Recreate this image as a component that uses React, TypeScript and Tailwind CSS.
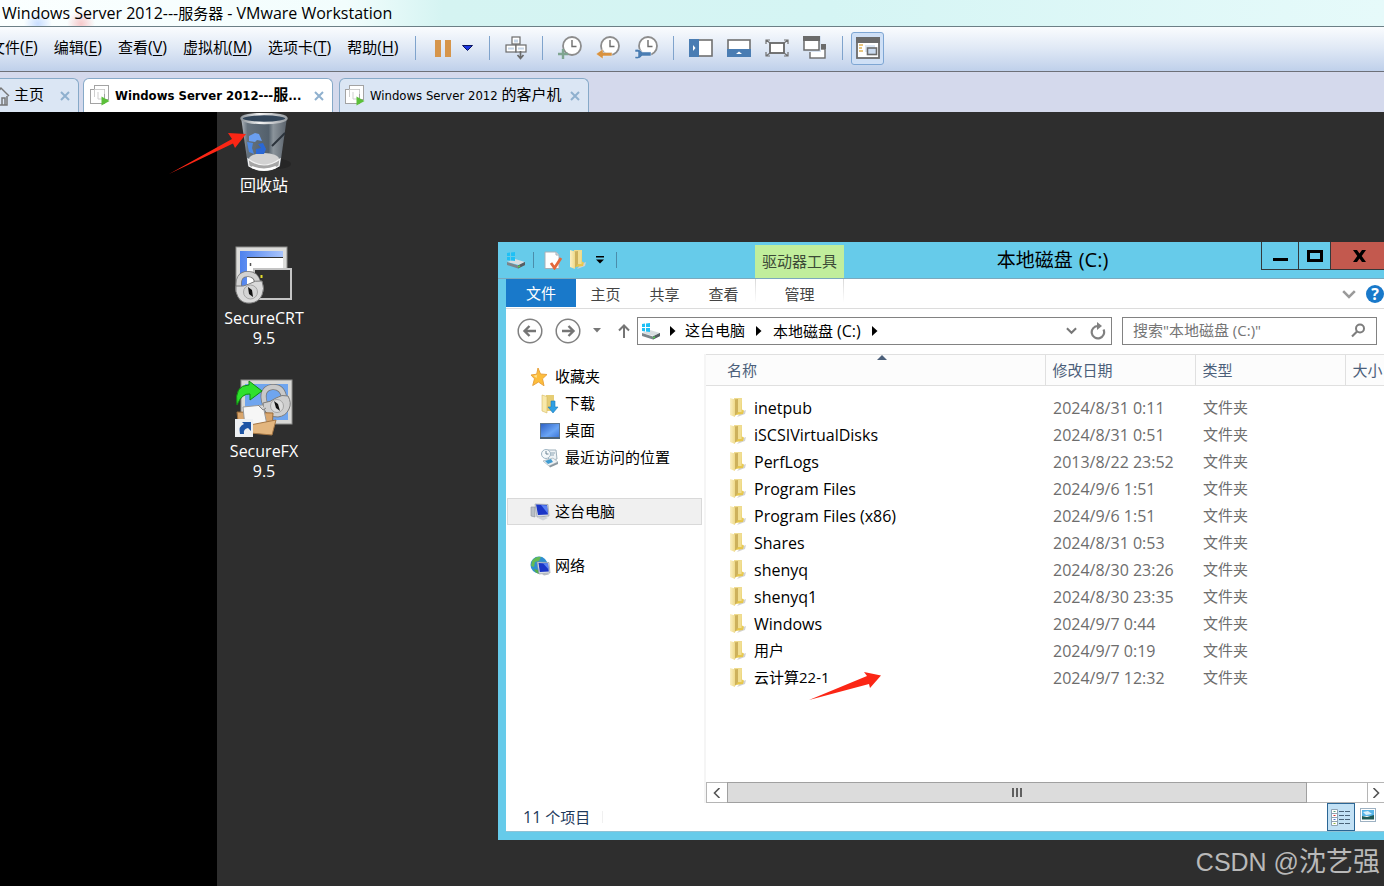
import type { ReactNode } from "react";

/* ---------- VMware toolbar icons ---------- */

function Clock({ children }: { children: ReactNode }) {
  return (
    <svg width="24" height="26" viewBox="0 0 24 26">
      <circle cx="14" cy="11" r="9" fill="#fff" stroke="#8d8d8d" strokeWidth="1.8" />
      <path d="M14 5v6.5h4.5" fill="none" stroke="#6e6e6e" strokeWidth="1.4" />
      {children}
    </svg>
  );
}

function PauseIcon() {
  return (
    <svg width="16" height="17" viewBox="0 0 16 17">
      <path d="M0 0h6v17H0zM10 0h6v17h-6z" fill="#d6954b" />
    </svg>
  );
}

function SendKeysIcon() {
  return (
    <svg width="22" height="24" viewBox="0 0 22 24">
      <g fill="#fff" stroke="#6b6b6b" strokeWidth="1.2">
        <rect x="7" y="1" width="8" height="7" />
        <rect x="1" y="9" width="10" height="7" />
        <rect x="11" y="9" width="10" height="7" />
      </g>
      <path d="M9 3.500h4v3H9zM3 11.500h6v2H3zM13 11.500h6v2h-6z" fill="#c6d6e8" />
      <path d="M15.500 15v7M12.500 19l3 3.500 3-3.500" fill="none" stroke="#6b6b6b" strokeWidth="1.7" />
    </svg>
  );
}

function SidebarIcon() {
  return (
    <svg width="24" height="18" viewBox="0 0 24 18">
      <rect x="1" y="1" width="22" height="16" fill="#fff" stroke="#707070" strokeWidth="1.6" />
      <path d="M0 0h10v18H0z" fill="#4a7db3" />
      <path d="M4 6l2.500 3L4 12z" fill="#fff" />
    </svg>
  );
}

function ThumbBarIcon() {
  return (
    <svg width="24" height="18" viewBox="0 0 24 18">
      <rect x="1" y="1" width="22" height="16" fill="#fff" stroke="#707070" strokeWidth="1.6" />
      <path d="M0 10h24v8H0z" fill="#4a7db3" />
      <path d="M9 15l3-2.500 3 2.500z" fill="#fff" />
    </svg>
  );
}

function FullscreenIcon() {
  return (
    <svg width="24" height="18" viewBox="0 0 24 18">
      <rect x="5" y="4" width="14" height="10" fill="#fff" stroke="#666" strokeWidth="1.8" />
      <path
        d="M1 5V1h4M1 1l4 3M19 1h4v4M23 1l-4 3M1 13v4h4M1 17l4-3M23 13v4h-4M23 17l-4-3"
        fill="none"
        stroke="#707070"
        strokeWidth="1.2"
      />
    </svg>
  );
}

function UnityIcon() {
  return (
    <svg width="24" height="24" viewBox="0 0 24 24">
      <rect x="7" y="13" width="15" height="9" fill="#fff" stroke="#6b6b6b" strokeWidth="1.4" />
      <path d="M18 8h5v5h-5z" fill="#6b6b6b" />
      <rect x="0" y="0" width="18" height="16" fill="#d6e2f1" />
      <rect x="1" y="1" width="15" height="13" fill="#fff" stroke="#6b6b6b" strokeWidth="1.5" />
      <path d="M0 0h17v5H0z" fill="#6b6b6b" />
    </svg>
  );
}

function ConsoleIcon() {
  return (
    <svg width="24" height="22" viewBox="0 0 24 22">
      <rect x="1" y="1" width="22" height="20" fill="#fff" stroke="#6b6b6b" strokeWidth="1.8" />
      <path d="M0 0h24v6H0z" fill="#6b6b6b" />
      <path d="M3 8h4M3 11h3M3 14h4" stroke="#e0b356" strokeWidth="1.3" />
      <rect x="9" y="8" width="10" height="7" fill="#dce7f4" />
      <rect x="11.500" y="11" width="9" height="6.500" fill="#c9daf0" stroke="#6b6b6b" strokeWidth="1.6" />
    </svg>
  );
}

function VmTabIcon() {
  return (
    <svg width="20" height="21" viewBox="0 0 20 21" className="shrink-0">
      <g fill="#fff" stroke="#a3a3a3">
        <rect x="4.500" y=".5" width="14" height="14" />
        <rect x=".5" y="4.500" width="14" height="14" />
      </g>
      <path d="M4.500 12V4.500H14.500V9M8 7v7h6" fill="none" stroke="#cfcfcf" />
      <path d="M11.500 11.500l8 4.500-8 4.500z" fill="#5cc03a" />
    </svg>
  );
}

function CloseGlyph() {
  return (
    <svg width="10" height="10" viewBox="0 0 10 10">
      <path d="M1 1l8 8M9 1L1 9" stroke="#8fb0ce" strokeWidth="2" />
    </svg>
  );
}

/* ---------- Desktop icons ---------- */

function RecycleBin() {
  return (
    <svg width="58" height="60" viewBox="0 0 58 60">
      <defs>
        <linearGradient id="bin" x1="0" x2="1">
          <stop offset="0" stopColor="#b4bac0" />
          <stop offset=".14" stopColor="#66727d" />
          <stop offset=".6" stopColor="#53606c" />
          <stop offset=".7" stopColor="#8b949b" />
          <stop offset="1" stopColor="#59616a" />
        </linearGradient>
        <linearGradient id="rim" x1="0" x2="1">
          <stop offset="0" stopColor="#8e959b" />
          <stop offset=".4" stopColor="#f4f4f4" />
          <stop offset="1" stopColor="#9a9fa4" />
        </linearGradient>
      </defs>
      <ellipse cx="42" cy="51" rx="14" ry="5" fill="#262626" />
      <path d="M6 4l7 49q16 9 32 0l7-49z" fill="url(#bin)" />
      <path d="M50 20L37 33" stroke="#2b333b" strokeWidth="2" />
      <ellipse cx="29" cy="46" rx="15" ry="6" fill="#d2d2d2" />
      <path d="M13 46q16 12 32 0l-1 7q-15 9-30 0z" fill="#a6a6a6" stroke="#f3f3f3" strokeWidth="1.200" />
      <path d="M17 54q12 5 24 0" fill="none" stroke="#fff" strokeWidth="2" />
      <ellipse cx="29" cy="5.500" rx="22.500" ry="4.500" fill="#33465a" stroke="url(#rim)" strokeWidth="2.500" />
      <path d="M14 23l6-3 4 1 3 7-5-1-2 2-6-1z" fill="#6b9ff0" />
      <path d="M12 29l6 1-1 5 2 6-5-2z" fill="#4c88e4" />
      <path d="M23 31l5-1 3 6-2 5h-8v-5l5-1z" fill="#2b68d6" />
    </svg>
  );
}

function SecureCrt() {
  return (
    <svg width="58" height="58" viewBox="0 0 58 58">
      <defs>
        <linearGradient id="crt" x1="0" x2="1">
          <stop offset="0" stopColor="#4e82ee" />
          <stop offset="1" stopColor="#a9c4fb" />
        </linearGradient>
      </defs>
      <rect x="1" y="1" width="51" height="44" fill="#dcdcda" stroke="#8e8e8c" />
      <rect x="5" y="5" width="43" height="36" fill="url(#crt)" />
      <rect x="12" y="11" width="36" height="30" fill="#fff" />
      <path d="M12 11.500h36" stroke="#333" />
      <path d="M15.500 17v3" stroke="#555" strokeWidth="1.500" />
      <rect x="19" y="23" width="37" height="30" fill="#303030" stroke="#c4c4c4" strokeWidth="2" />
      <path d="M26.500 29v3" stroke="#e5de2c" strokeWidth="2" />
      <path d="M4 42q-2-14 9-14 8 0 10 9" fill="none" stroke="#777" strokeWidth="6" />
      <path d="M4 42q-2-14 9-14 8 0 10 9" fill="none" stroke="#d2d2d2" strokeWidth="4.500" />
      <path d="M1 40q8 1 13-2 6-4 13-3 3 8 0 14-3 7-11 8-9 1-13-6-3-5-2-11z" fill="#dadada" stroke="#7c7c7c" />
      <circle cx="15.500" cy="46" r="7" fill="#d4d4d4" stroke="#a5a5a5" />
      <path d="M13 41l4 3 1 7-4-3z" fill="#111" />
    </svg>
  );
}

function SecureFx() {
  return (
    <svg width="58" height="60" viewBox="0 0 58 60">
      <rect x="6" y="1" width="51" height="44" fill="#d8d8d6" stroke="#8e8e8c" />
      <rect x="10" y="5" width="43" height="36" fill="#6fa5ef" />
      <path d="M30 25q-5-15 7-17 10-1 12 10" fill="none" stroke="#777" strokeWidth="6" />
      <path d="M30 25q-5-15 7-17 10-1 12 10" fill="none" stroke="#c9c9c9" strokeWidth="4.500" />
      <path d="M28 24q8-1 13-5 6-4 12-2 4 7 1 13-3 7-11 8-9 0-13-6-2-4-2-8z" fill="#cfcfcf" stroke="#7c7c7c" />
      <circle cx="42" cy="27" r="6.500" fill="#dcdcdc" stroke="#a5a5a5" />
      <path d="M39 22l4 3 2 7-4-3z" fill="#111" />
      <path d="M2 33l36 1-1 20-33-3z" fill="#d9a66d" stroke="#9c6c38" />
      <path d="M8 28l20-2 4 20-22 2z" fill="#f6f6f6" stroke="#999" />
      <path d="M23 26l5 5 3-2" fill="#ccc" stroke="#888" />
      <path d="M15 46l26-5-4 15-22-2z" fill="#e3b67f" stroke="#a67745" />
      <path d="M2 26Q-1 6 14 6V2l13 10-12 9v-6Q7 14 2 26z" fill="#2fe02c" stroke="#108a12" />
      <rect x="0" y="40" width="18" height="18" fill="#eef0f2" />
      <path d="M5 55q-2-8 4-10l-2-2h9v9l-3-3q-5 1-4 6z" fill="#1e55a5" />
    </svg>
  );
}

/* ---------- Explorer icons ---------- */

function DriveIcon() {
  return (
    <svg width="20" height="18" viewBox="0 0 20 18">
      <path d="M1 11l8-3 10 3-6 3z" fill="#d9dde0" />
      <path d="M1 11l11 3.500 7-3.500v3l-7 3.500-11-3.500z" fill="#7c848a" />
      <path d="M12 14.500l7-3.500v3l-7 3.500z" fill="#565d63" />
      <path d="M12 16l2-1" stroke="#56c755" strokeWidth="1.500" />
      <path d="M1 2l3-.5V5H1zM5 1.400L9 1v4H5zM1 6h3v3.500L1 9zM5 6h4v4l-4-.5z" fill="#1fc0f5" />
    </svg>
  );
}

function FolderIcon() {
  return (
    <svg width="18" height="22" viewBox="0 0 18 22">
      <defs>
        <linearGradient id="folder" x1="0" x2="0" y1="0" y2="1">
          <stop offset="0" stopColor="#efdc92" />
          <stop offset="1" stopColor="#e6c544" />
        </linearGradient>
        <linearGradient id="flap" x1="0" x2="1">
          <stop offset="0" stopColor="#fbf0c4" />
          <stop offset="1" stopColor="#efda8a" />
        </linearGradient>
      </defs>
      <path d="M12 15l5-2-1 4-8 3z" fill="#d3d3d3" />
      <path d="M5 1h8v11.500l2 1-1 3.500-8 1z" fill="url(#folder)" />
      <path d="M5 2.500L9 2v13l-3 4z" fill="#cdb15c" />
      <path d="M1 1l5 1.500V20L1 18z" fill="url(#flap)" />
      <path d="M9 2h3.500v13H9z" fill="#f1de93" />
    </svg>
  );
}

function PropertiesIcon() {
  return (
    <svg width="19" height="19" viewBox="0 0 19 19">
      <path d="M1 1h11l3 3v13.500H1z" fill="#fff" stroke="#a7b0b8" />
      <path d="M12 1v3h3" fill="#dde2e6" stroke="#a7b0b8" />
      <path d="M7 12l3.500 5L17 7" fill="none" stroke="#e4683b" strokeWidth="2.800" />
    </svg>
  );
}

function StarIcon() {
  return (
    <svg width="18" height="20" viewBox="0 0 18 20">
      <path d="M8 1l2.500 6L17 7.500l-4.500 4.300 1.500 7L8.500 15l-5.800 3.500 1.800-6.700L1 8l5.700-.8z" fill="#fdbd3b" stroke="#e8a33d" />
      <path d="M8 4L7 8 3.500 8.700l3 2.300z" fill="#ffe493" />
    </svg>
  );
}

function DownloadsIcon() {
  return (
    <svg width="20" height="20" viewBox="0 0 20 20">
      <path d="M6 1h8v16H7z" fill="#e6cd74" />
      <path d="M2 1l5 1.500V19l-5-2z" fill="#f8e9ab" stroke="#d6bb63" strokeWidth=".6" />
      <path d="M11 7h4v6h3l-5 6-5-6h3z" fill="#2f9fe3" stroke="#1c7bbb" strokeWidth=".6" />
    </svg>
  );
}

function DesktopIcon() {
  return (
    <svg width="20" height="18" viewBox="0 0 20 18">
      <defs>
        <linearGradient id="desk" x1="0" x2="1" y1="0" y2="1">
          <stop offset="0" stopColor="#2c5fc4" />
          <stop offset=".6" stopColor="#6aa5f5" />
          <stop offset="1" stopColor="#3c76d9" />
        </linearGradient>
      </defs>
      <rect x=".5" y="1.500" width="19" height="14" fill="url(#desk)" stroke="#5c7792" />
      <path d="M0 15h20v2H0z" fill="#4c6377" />
    </svg>
  );
}

function RecentIcon() {
  return (
    <svg width="20" height="20" viewBox="0 0 20 20">
      <path d="M7 2h9l1 9-8 2z" fill="#eef3f6" stroke="#9fb0bb" />
      <path d="M9 5h6M9 7h5" stroke="#8fa5b4" />
      <circle cx="6" cy="6" r="4.500" fill="#f5f9fb" stroke="#9fb6c4" />
      <path d="M6 3v3h2.500" fill="none" stroke="#6b8494" />
      <path d="M3 13l10-3 5 4-9 4z" fill="#eef1f3" stroke="#b9c4cb" />
      <path d="M5 13l6-2 2 3-5 2z" fill="#3f9bd0" />
      <path d="M9 18l9-4v2l-8 3.500z" fill="#8b979f" />
    </svg>
  );
}

function ComputerIcon() {
  return (
    <svg width="20" height="18" viewBox="0 0 20 18">
      <path d="M1 4h4v10l-4-1z" fill="#b9bfc6" stroke="#8a929b" strokeWidth=".6" />
      <path d="M8 15l6-2 4 2-5 2.500z" fill="#cfd3d8" />
      <path d="M5 1l13 .5 1 11.500-12 1z" fill="#d8dce2" stroke="#8a929b" strokeWidth=".6" />
      <path d="M6 1.500l11 .5 1 9.500-10 .5z" fill="#1b36c7" />
      <path d="M11 2l6 .5.800 8z" fill="#5b82f2" />
    </svg>
  );
}

function NetworkIcon() {
  return (
    <svg width="21" height="20" viewBox="0 0 21 20">
      <circle cx="9" cy="9" r="8.500" fill="#2f8fd0" />
      <path d="M2 5q4-5 9-4l-2 4-4 1-1 5-3-1z" fill="#63bb54" />
      <path d="M4 13l4 1 1 4q-4-1-5-5z" fill="#58ad4a" />
      <path d="M7 6l12 .5 1 10.500-11 1z" fill="#d8dce2" stroke="#8a929b" strokeWidth=".6" />
      <path d="M8.500 7l9.500.5.800 8-9 .5z" fill="#1b36c7" />
      <path d="M13 7.300l5 .3.600 6z" fill="#5b82f2" />
      <path d="M12 18l6-1 1 1.500-5 1z" fill="#b7bcc3" />
    </svg>
  );
}

function NavCircle({ flip }: { flip?: boolean }) {
  return (
    <svg width="26" height="26" viewBox="0 0 26 26">
      <circle cx="13" cy="13" r="11.800" fill="none" stroke="#818181" strokeWidth="1.500" />
      <path
        d={flip ? "M7 13h11M13.500 8l5 5-5 5" : "M19 13H8M12.500 8l-5 5 5 5"}
        fill="none"
        stroke="#757575"
        strokeWidth="2.400"
      />
    </svg>
  );
}

function SmallTriangle() {
  return (
    <svg width="6" height="10" viewBox="0 0 6 10">
      <path d="M0 0l5.500 5L0 10z" fill="#000" />
    </svg>
  );
}

function Chevron({ color, size }: { color: string; size: number }) {
  return (
    <svg width={size} height={size} viewBox="0 0 12 12">
      <path d="M1 3.500l5 5 5-5" fill="none" stroke={color} strokeWidth="2.200" />
    </svg>
  );
}

function RedArrow() {
  return (
    <svg width="80" height="44" viewBox="0 0 80 44">
      <path d="M1 42L64 7l-4-6 18 1-11 14-2-4.500z" fill="#fb2615" />
    </svg>
  );
}

function RedArrowLow() {
  return (
    <svg width="74" height="30" viewBox="0 0 74 30">
      <path d="M1 29l58-24-3-4 17 3.500L62 17l-1-4z" fill="#fb2615" />
    </svg>
  );
}

/* ---------- Data ---------- */

const menus = [
  ["文件", "F"],
  ["编辑", "E"],
  ["查看", "V"],
  ["虚拟机", "M"],
  ["选项卡", "T"],
  ["帮助", "H"],
];

const folders = [
  { name: "inetpub", date: "2024/8/31 0:11" },
  { name: "iSCSIVirtualDisks", date: "2024/8/31 0:51" },
  { name: "PerfLogs", date: "2013/8/22 23:52" },
  { name: "Program Files", date: "2024/9/6 1:51" },
  { name: "Program Files (x86)", date: "2024/9/6 1:51" },
  { name: "Shares", date: "2024/8/31 0:53" },
  { name: "shenyq", date: "2024/8/30 23:26" },
  { name: "shenyq1", date: "2024/8/30 23:35" },
  { name: "Windows", date: "2024/9/7 0:44" },
  { name: "用户", date: "2024/9/7 0:19", chinese: true },
  { name: "云计算22-1", date: "2024/9/7 12:32", chinese: true },
];

function Separator() {
  return <span className="mx-2 h-6 w-px shrink-0 bg-[#7fa3cc]" />;
}

function ToolButton({ label, children }: { label: string; children: ReactNode }) {
  return (
    <button aria-label={label} className="flex h-8 w-[38px] shrink-0 items-center justify-center">
      {children}
    </button>
  );
}

/* ---------- VMware frame ---------- */

function Toolbar() {
  return (
    <div className="flex h-[46px] shrink-0 items-center border-y border-t-[#6c7f86] border-b-[#6d7078] bg-linear-to-b from-[#fafcfe] via-[#dfe8f5] to-[#bfd0ea] pb-[2px]">
      <nav className="flex w-[407px] shrink-0 gap-4 pb-[2px] text-[15px] whitespace-nowrap">
        {menus.map(([label, key]) => (
          <button key={key} className="shrink-0 first:-ml-[10px]">
            {label}
            <span className="text-[16px]">
              (<span className="underline underline-offset-2">{key}</span>)
            </span>
          </button>
        ))}
      </nav>
      <Separator />
      <ToolButton label="挂起">
        <PauseIcon />
      </ToolButton>
      <button aria-label="电源选项" className="w-[19px] shrink-0">
        <svg width="11" height="6" viewBox="0 0 11 6">
          <path d="M.5.5h10L5.500 5.500z" fill="#1a35e0" stroke="#0b1560" />
        </svg>
      </button>
      <Separator />
      <button aria-label="发送按键" className="flex h-8 w-9 shrink-0 items-center justify-center">
        <SendKeysIcon />
      </button>
      <Separator />
      <ToolButton label="拍摄快照">
        <Clock>
          <path d="M5 14v10M0 19h10" stroke="#7fa591" strokeWidth="2.400" />
        </Clock>
      </ToolButton>
      <ToolButton label="恢复快照">
        <Clock>
          <path d="M0 19l7-5v3.500h9v3.500H7V24z" fill="#d9923f" stroke="#e6eef8" strokeWidth=".5" />
        </Clock>
      </ToolButton>
      <ToolButton label="管理快照">
        <Clock>
          <path
            d="M1 14.500q5-1 7 2.500h9v4H8q-2 3.500-7 2.500v-2h3v-4.500H1z"
            fill="#4a7db3"
            stroke="#e6eef8"
            strokeWidth=".5"
          />
        </Clock>
      </ToolButton>
      <Separator />
      <ToolButton label="显示库">
        <SidebarIcon />
      </ToolButton>
      <ToolButton label="缩略图栏">
        <ThumbBarIcon />
      </ToolButton>
      <ToolButton label="全屏">
        <FullscreenIcon />
      </ToolButton>
      <ToolButton label="Unity">
        <UnityIcon />
      </ToolButton>
      <Separator />
      <button
        aria-label="控制台视图"
        className="flex size-[33px] shrink-0 items-center justify-center rounded-[3px] border border-[#7ea6d3] bg-[#cfe0f6]"
      >
        <ConsoleIcon />
      </button>
    </div>
  );
}

function VmTabs() {
  return (
    <div className="flex h-10 shrink-0 items-end bg-[#d4d9ec] font-['DejaVu_Sans_Condensed','Noto_Sans_CJK_SC',sans-serif] text-[13px] whitespace-nowrap">
      <div className="mr-1 flex h-[34px] w-[79px] items-center rounded-tr-md border border-b-0 border-l-0 border-[#86a9c8] bg-[#dbe6f4]">
        <svg width="14" height="22" viewBox="0 0 14 22" className="-ml-1 shrink-0">
          <path d="M1 8l4-5 8 8M3 8v12h8v-9M6 20v-7h3v7" fill="none" stroke="#777" strokeWidth="1.500" />
        </svg>
        <button className="ml-1 text-[15px]">主页</button>
        <button aria-label="关闭主页" className="mr-2 ml-auto">
          <CloseGlyph />
        </button>
      </div>
      <div className="mr-[6px] flex h-[34px] w-[250px] items-center rounded-t-md border border-b-0 border-[#86a9c8] bg-white pl-[6px]">
        <VmTabIcon />
        <button className="ml-[5px] font-bold">
          Windows Server 2012---<span className="text-[15px]">服</span>...
        </button>
        <button aria-label="关闭选项卡" className="mr-2 ml-auto">
          <CloseGlyph />
        </button>
      </div>
      <div className="flex h-[34px] w-[250px] items-center rounded-t-md border border-b-0 border-[#86a9c8] bg-[#dbe6f4] pl-[5px]">
        <VmTabIcon />
        <button className="ml-[5px]">
          Windows Server 2012 <span className="text-[15px]">的客户机</span>
        </button>
        <button aria-label="关闭选项卡" className="mr-2 ml-auto">
          <CloseGlyph />
        </button>
      </div>
    </div>
  );
}

/* ---------- Explorer window ---------- */

function TitleBar() {
  return (
    <header className="flex h-[37px] border-b border-[#7ba9bd] pl-2">
      <div className="flex w-[249px] shrink-0 items-center">
        <DriveIcon />
        <span className="mr-2 ml-[7px] h-4 w-px bg-[#4b8dab]" />
        <button aria-label="属性" className="ml-[2px]">
          <PropertiesIcon />
        </button>
        <button aria-label="新建文件夹" className="ml-[6px]">
          <FolderIcon />
        </button>
        <button aria-label="自定义快速访问工具栏" className="mr-3 ml-[9px]">
          <svg width="8" height="8" viewBox="0 0 8 8">
            <path d="M0 0h8v1.500H0zM0 3.500h8L4 7.500z" fill="#000" />
          </svg>
        </button>
        <span className="h-4 w-px bg-[#4b8dab]" />
      </div>
      <div className="mt-[3px] flex w-[89px] shrink-0 items-center justify-center bg-[#c1ee9c] text-[15px] text-[#3c4a37]">
        驱动器工具
      </div>
      <h1 className="flex flex-1 items-center justify-center gap-[6px] text-[19px]">
        本地磁盘 <span className="text-[20px]">(C:)</span>
      </h1>
      <div className="flex h-7 shrink-0 border border-t-0 border-r-0 border-[#33393c]">
        <button aria-label="最小化" className="flex w-9 items-center justify-center pt-2">
          <span className="h-[3px] w-[15px] bg-black" />
        </button>
        <button aria-label="最大化" className="flex w-[33px] items-center justify-center border-x border-[#33393c]">
          <span className="h-3 w-4 border-3 border-black" />
        </button>
        <button aria-label="关闭" className="flex w-[53px] items-center justify-center bg-[#c3594e] pl-1">
          <svg width="13" height="12" viewBox="0 0 13 12">
            <path d="M0 0h4l2.500 3.500L9 0h4L8.700 6 13 12H9L6.500 8.500 4 12H0l4.300-6z" fill="#000" />
          </svg>
        </button>
      </div>
    </header>
  );
}

function Ribbon() {
  return (
    <div className="flex h-[30px] border-b border-[#dcdcdc] text-[15px] text-[#444] [&>button]:pt-px">
      <button className="mb-px w-[70px] bg-[#1979ca] text-white">文件</button>
      <button className="w-[59px]">主页</button>
      <button className="w-[59px]">共享</button>
      <button className="w-[59px]">查看</button>
      <button className="ml-[2px] w-[89px] border-x [border-image:linear-gradient(#d6d6d6,transparent_80%)_1]">
        管理
      </button>
      <div className="ml-auto flex items-center gap-[10px]">
        <button aria-label="展开功能区">
          <Chevron color="#9a9a9a" size={14} />
        </button>
        <button
          aria-label="帮助"
          className="flex size-[18px] items-center justify-center rounded-full bg-[#1979ca] text-[16px] font-bold text-white"
        >
          ?
        </button>
      </div>
    </div>
  );
}

function AddressRow() {
  return (
    <div className="mb-[2px] flex h-[43px] items-center pr-[7px] pl-[11px] text-[15px]">
      <button aria-label="后退">
        <NavCircle />
      </button>
      <button aria-label="前进" className="ml-3">
        <NavCircle flip />
      </button>
      <button aria-label="最近位置" className="ml-3">
        <svg width="9" height="5" viewBox="0 0 9 5">
          <path d="M0 0h8L4 4.500z" fill="#777" />
        </svg>
      </button>
      <button aria-label="上移" className="ml-4">
        <svg width="12" height="14" viewBox="0 0 12 14">
          <path d="M6 14V2M1 6.500l5-5 5 5" fill="none" stroke="#757575" strokeWidth="2" />
        </svg>
      </button>
      <div className="ml-[7px] flex h-7 flex-1 items-center border border-[#828282] pr-1 pl-[3px]">
        <DriveIcon />
        <span className="mx-[9px]">
          <SmallTriangle />
        </span>
        <button>这台电脑</button>
        <span className="mx-[11px]">
          <SmallTriangle />
        </span>
        <button>
          本地磁盘 <span className="text-[16px]">(C:)</span>
        </button>
        <span className="ml-[11px]">
          <SmallTriangle />
        </span>
        <button aria-label="历史" className="ml-auto">
          <Chevron color="#777" size={11} />
        </button>
        <button aria-label="刷新" className="ml-3">
          <svg width="18" height="18" viewBox="0 0 18 18">
            <path d="M14.500 7.500A6.200 6.200 0 1 1 9 4" fill="none" stroke="#808080" strokeWidth="2.200" />
            <path d="M8 0l5 4-5 4z" fill="#808080" />
          </svg>
        </button>
      </div>
      <div className="ml-[10px] flex h-7 w-[255px] shrink-0 items-center border border-[#828282] px-[10px]">
        <input
          aria-label="搜索"
          placeholder={'搜索"本地磁盘 (C:)"'}
          className="w-full min-w-0 flex-1 outline-none placeholder:text-[#757575]"
        />
        <svg width="15" height="15" viewBox="0 0 15 15" className="shrink-0">
          <circle cx="9" cy="5.500" r="4" fill="none" stroke="#7d7d7d" strokeWidth="2" />
          <path d="M6 8.500L1 13.500" stroke="#7d7d7d" strokeWidth="2.200" />
        </svg>
      </div>
    </div>
  );
}

function SideNav() {
  return (
    <nav className="w-[200px] shrink-0 border-r-2 border-[#f5f5f5] pt-[9px] pr-[2px] pl-px text-[15px] [&_a]:flex [&_a]:h-[27px] [&_a]:items-center">
      <a href="#fav" className="gap-[7px] pl-[23px]">
        <StarIcon />
        收藏夹
      </a>
      <a href="#downloads" className="gap-[5px] pl-[33px]">
        <DownloadsIcon />
        下载
      </a>
      <a href="#desktop" className="gap-[5px] pl-[33px]">
        <DesktopIcon />
        桌面
      </a>
      <a href="#recent" className="gap-[5px] pl-[33px]">
        <RecentIcon />
        最近访问的位置
      </a>
      <a href="#pc" className="mt-[27px] gap-[5px] border border-[#d9d9d9] bg-[#f0f0f0] pl-[22px]">
        <ComputerIcon />
        这台电脑
      </a>
      <a href="#network" className="mt-[27px] gap-1 pl-[23px]">
        <NetworkIcon />
        网络
      </a>
    </nav>
  );
}

function FileTable() {
  return (
    <table className="w-full table-fixed border-collapse text-left whitespace-nowrap">
      <colgroup>
        <col />
        <col className="w-[150px]" />
        <col className="w-[150px]" />
        <col className="w-[39px]" />
      </colgroup>
      <thead className="text-[15px] text-[#4c607a]">
        <tr className="h-[31px] border-y border-[#e0e0e0] bg-[#fcfcfc] [&>th]:p-0 [&>th]:font-normal">
          <th>
            <div className="relative pl-[21px]">
              名称
              <svg width="10" height="5" viewBox="0 0 10 5" className="absolute -top-1 left-[171px]">
                <path d="M0 5l5-5 5 5z" fill="#4c607a" />
              </svg>
            </div>
          </th>
          <th className="border-l border-[#e0e0e0]">
            <div className="pl-[7px]">修改日期</div>
          </th>
          <th className="border-l border-[#e0e0e0]">
            <div className="pl-[7px]">类型</div>
          </th>
          <th className="overflow-hidden border-l border-[#e0e0e0]">
            <div className="pl-[7px]">大小</div>
          </th>
        </tr>
      </thead>
      <tbody className="text-[#6d6d6d] before:block before:h-2">
        {folders.map(({ name, date, chinese }) => (
          <tr key={name} className="h-[27px] text-[16px] [&>td]:p-0">
            <td className="text-black">
              <div className="flex items-center gap-[7px] pl-[23px]">
                <FolderIcon />
                <span className={chinese ? "text-[15px]" : ""}>{name}</span>
              </div>
            </td>
            <td>
              <div className="pl-2">{date}</div>
            </td>
            <td className="text-[15px]">
              <div className="pl-2">文件夹</div>
            </td>
            <td />
          </tr>
        ))}
      </tbody>
    </table>
  );
}

function ScrollBar() {
  return (
    <div className="mt-auto flex h-[21px] border border-r-0 border-[#b5b5b5]">
      <button aria-label="向左滚动" className="flex w-5 items-center justify-center">
        <svg width="8" height="10" viewBox="0 0 8 10">
          <path d="M6.500 0l-5 5 5 5" fill="none" stroke="#555" strokeWidth="1.600" />
        </svg>
      </button>
      <div className="-my-px flex flex-1 items-center justify-center gap-[2px] border border-[#a0a0a0] bg-[#dcdcdc]">
        <span className="h-[9px] w-[2px] bg-[#606060]" />
        <span className="h-[9px] w-[2px] bg-[#606060]" />
        <span className="h-[9px] w-[2px] bg-[#606060]" />
      </div>
      <div className="w-[60px]" />
      <button aria-label="向右滚动" className="flex w-[17px] items-center justify-center border-l border-[#b5b5b5]">
        <svg width="8" height="10" viewBox="0 0 8 10">
          <path d="M1.500 0l5 5-5 5" fill="none" stroke="#555" strokeWidth="1.600" />
        </svg>
      </button>
    </div>
  );
}

function StatusBar() {
  return (
    <footer className="flex h-[29px] items-center border-b border-[#8fc3d6] pr-[7px] pl-[17px] text-[15px] text-[#1e395b]">
      <span>
        <span className="text-[16px]">11</span> 个项目
      </span>
      <span className="ml-3 h-3 w-px bg-[#f0f0f0]" />
      <button
        aria-label="详细信息"
        className="ml-auto flex h-full w-7 items-center justify-center border border-[#2b6695] bg-[#c2e1f5]"
      >
        <svg width="20" height="17" viewBox="0 0 20 17">
          <path d="M.5.500h6v16h-6zM.5 4.500h6M.5 8.500h6M.5 12.500h6" fill="#fff" stroke="#8ea2b3" />
          <path d="M2.500 2.500h2" stroke="#55a07b" />
          <path d="M2.500 6.500h2" stroke="#d23535" />
          <path d="M2.500 10.500h2" stroke="#4c6fd0" />
          <path d="M2.500 14.500h2" stroke="#91b33d" />
          <path d="M8 2.500h5M14 2.500h5M8 6.500h5M14 6.500h5M8 10.500h5M14 10.500h5M8 14.500h5M14 14.500h5" stroke="#4a6378" />
        </svg>
      </button>
      <button aria-label="大图标" className="ml-[5px] pb-1">
        <svg width="17" height="14" viewBox="0 0 17 14">
          <rect x=".5" y=".5" width="15" height="13" fill="#fff" stroke="#9db1c2" />
          <path d="M2 2h12v6H2z" fill="#58b5e8" />
          <path d="M3 4l5-1 4 3-6 1z" fill="#d9f0fb" />
          <path d="M2 8l5 1 7-2v4.500H2z" fill="#205b56" />
        </svg>
      </button>
    </footer>
  );
}

function Explorer() {
  return (
    <section className="absolute top-[130px] right-0 left-[281px] bg-[#66cbea]">
      <TitleBar />
      <div className="mb-2 ml-2 bg-white">
        <Ribbon />
        <AddressRow />
        <div className="flex h-[449px]">
          <SideNav />
          <div className="flex min-w-0 flex-1 flex-col">
            <FileTable />
            <ScrollBar />
          </div>
        </div>
        <StatusBar />
      </div>
      <div className="pointer-events-none absolute top-[429px] left-[310px]">
        <RedArrowLow />
      </div>
    </section>
  );
}

function Shortcut({ label, children }: { label: string; children: ReactNode }) {
  return (
    <button className="flex h-[133px] flex-col items-center leading-5 text-white">
      <span className="flex h-[62px] items-start">{children}</span>
      <span className="w-[84px] text-center">{label}</span>
    </button>
  );
}

export default function App() {
  return (
    <div className="flex min-h-screen flex-col overflow-hidden font-['Open_Sans','Noto_Sans_CJK_SC',sans-serif] text-black">
      <div className="flex h-[26px] shrink-0 items-center bg-[radial-gradient(circle_at_38px_24px,#c9deff,transparent_14px),radial-gradient(circle_at_81px_24px,#f7c9cb,transparent_14px),linear-gradient(to_right,#fbffff,#f2fdfd_25%,#d5f4f2_32%,#d5f5f4_60%,#e6fafa)] pl-[2px] text-[16px] whitespace-nowrap">
        Windows Server 2012---<span className="text-[15px]">服务器</span>
        <span className="pl-1">- VMware Workstation</span>
      </div>
      <Toolbar />
      <VmTabs />
      <main className="flex flex-1 bg-black">
        <div className="w-[217px] shrink-0" />
        <div className="relative min-h-[774px] flex-1 bg-[#2e2e2e]">
          <div className="flex w-[94px] flex-col pt-px text-[16px]">
            <Shortcut label="回收站">
              <RecycleBin />
            </Shortcut>
            <Shortcut label="SecureCRT 9.5">
              <SecureCrt />
            </Shortcut>
            <Shortcut label="SecureFX 9.5">
              <SecureFx />
            </Shortcut>
          </div>
          <div className="pointer-events-none absolute top-[20px] -left-[49px]">
            <RedArrow />
          </div>
          <Explorer />
          <div className="absolute right-1 bottom-1 font-['Liberation_Sans','Noto_Sans_CJK_SC',sans-serif] text-[25px] text-[#b9b9b9]">
            CSDN @<span className="text-[27px]">沈艺强</span>
          </div>
        </div>
      </main>
    </div>
  );
}
